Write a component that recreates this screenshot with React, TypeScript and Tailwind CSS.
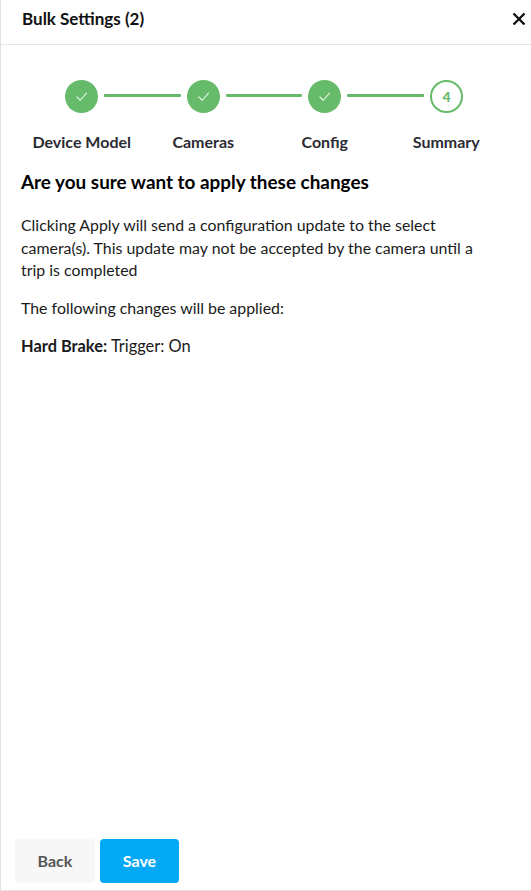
import React from "react";

function Done() {
  return (
    <div className="w-[33px] h-[33px] rounded-full bg-[#66bb6a] flex items-center justify-center shrink-0">
      <svg width="15" height="15" viewBox="0 0 24 24" fill="none" stroke="#e8f5e9" strokeWidth="1.8" strokeLinecap="round" strokeLinejoin="round">
        <path d="M4.5 12.5 L10 18 L20 6.5" />
      </svg>
    </div>
  );
}

function Line() {
  return <div className="flex-1 h-[3px] mx-[6px] -mt-[2px] bg-[#66bb6a] rounded-[1px]" />;
}

export default function App() {
  return (
    <div className="w-[531px] h-[891px] bg-white border-l border-b border-[#e0e0e0] flex flex-col text-[#1a1a1a] font-['Lato','Noto_Sans',sans-serif]">
      <header className="h-[45px] shrink-0 border-b border-[#e5e5e5] flex items-center justify-between pl-[21px] pr-[4px]">
        <h1 className="text-[17px] font-bold text-[#111] -mt-[6px]">Bulk Settings (2)</h1>
        <svg width="16" height="16" viewBox="0 0 16 16" fill="none" stroke="#111" strokeWidth="2.4" className="-mt-[6px]">
          <path d="M2.5 2.5 L13.5 13.5 M13.5 2.5 L2.5 13.5" />
        </svg>
      </header>
      <main className="flex-1 flex flex-col px-[20px]">
        <div className="flex items-center pl-[44px] pr-[48px] mt-[35px]">
          <Done />
          <Line />
          <Done />
          <Line />
          <Done />
          <Line />
          <div className="w-[33px] h-[33px] rounded-full border-[2px] border-[#66bb6a] flex items-center justify-center shrink-0 text-[14px] font-black text-[#66bb6a]">
            4
          </div>
        </div>
        <div className="grid grid-cols-4 w-[486px] mt-[20px] text-center text-[16px] leading-[18px] font-bold text-[#2b2b33]">
          <div>Device Model</div>
          <div>Cameras</div>
          <div>Config</div>
          <div>Summary</div>
        </div>
        <h2 className="mt-[19px] text-[18.9px] leading-[24px] font-bold text-[#000]">Are you sure want to apply these changes</h2>
        <p className="mt-[20px] text-[15.9px] leading-[22.5px] w-[470px]">
          Clicking Apply will send a configuration update to the select camera(s). This update may not be accepted by the camera until a trip is completed
        </p>
        <p className="mt-[15px] text-[15.9px] leading-[22.5px]">The following changes will be applied:</p>
        <p className="mt-[16px] text-[16.4px] leading-[22.5px]">
          <strong className="font-bold">Hard Brake:</strong> Trigger: On
        </p>
      </main>
      <footer className="shrink-0 flex gap-[5px] pl-[14px] pb-[7px]">
        <button className="w-[80px] h-[44px] rounded-[4px] bg-[#f7f7f7] text-[16px] font-bold text-[#555]">Back</button>
        <button className="w-[79px] h-[44px] rounded-[4px] bg-[#03a9f4] text-[16px] font-bold text-white">Save</button>
      </footer>
    </div>
  );
}
